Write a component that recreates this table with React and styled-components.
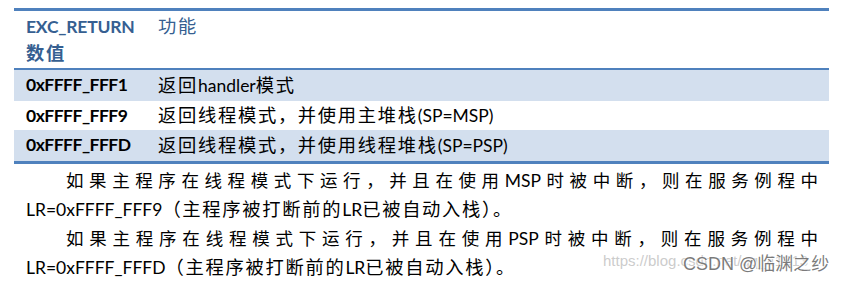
import React from "react";
import styled, { createGlobalStyle } from "styled-components";

const Global = createGlobalStyle`
  html, body { margin: 0; padding: 0; background: #ffffff; }
  body { font-family: Lato, "Noto Sans CJK SC", sans-serif; color: #000; }
`;

const Page = styled.div`
  position: relative;
  width: 845px;
  height: 281px;
  overflow: hidden;
  padding: 8px 0 0 14px;
  box-sizing: border-box;
`;

const Table = styled.table`
  width: 815px;
  border-collapse: collapse;
  font-size: 17.5px;
`;

const HeadRow = styled.tr`
  border-top: 3px solid #4f81bd;
  border-bottom: 2px solid #4f81bd;
`;

const HeadCell = styled.th`
  text-align: left;
  vertical-align: top;
  font-weight: ${(p) => (p.$bold ? 700 : 400)};
  color: #365f91;
  line-height: 27px;
  height: 59px;
  padding: 2px 0 0 12px;
  box-sizing: border-box;
  letter-spacing: ${(p) => (p.$bold ? "-0.2px" : "0")};
  width: ${(p) => p.$w || "auto"};
`;

const Row = styled.tr`
  background: ${(p) => (p.$shade ? "#d3dfee" : "#ffffff")};
  border-bottom: ${(p) => (p.$last ? "3px solid #4f81bd" : "none")};
`;

const CodeCell = styled.td`
  font-weight: 700;
  letter-spacing: -0.5px;
  padding: 0 0 0 12px;
  height: ${(p) => p.$h}px;
  line-height: ${(p) => p.$h}px;
  width: 120px;
`;

const TextCell = styled.td`
  padding: 0 0 0 12px;
  height: ${(p) => p.$h}px;
  line-height: ${(p) => p.$h}px;
`;

const Han = styled.span`
  font-size: 18.3px;
  letter-spacing: 1.7px;
`;

const Body = styled.div`
  width: 792px;
  padding: 2px 0 0 12px;
  font-size: 17.5px;
  line-height: 29px;
`;

const JustLine = styled.div`
  text-indent: 40px;
  text-align: justify;
  text-align-last: justify;
  text-justify: inter-character;
`;

const Line = styled.div``;

const Watermark = styled.div`
  position: absolute;
  left: 603px;
  top: 252px;
  white-space: nowrap;
  font-family: "Liberation Sans", sans-serif;
  font-size: 15px;
  color: rgba(190, 190, 190, 0.8);
`;

const Mark = styled.div`
  position: absolute;
  left: 683px;
  top: 249px;
  white-space: nowrap;
  font-family: "Liberation Sans", "Noto Sans CJK SC", sans-serif;
  font-size: 18px;
  color: rgba(80, 80, 80, 0.75);
  text-shadow: 0 0 2px #fff, 1px 1px 0 #fff;
`;

const HAN_RE = /([\u3000-\u303f\u3400-\u9fff\uff00-\uffef]+)/;

function Mixed({ text }) {
  return text
    .split(HAN_RE)
    .filter(Boolean)
    .map((part, i) =>
      HAN_RE.test(part) ? <Han key={i}>{part}</Han> : <React.Fragment key={i}>{part}</React.Fragment>
    );
}

const rows = [
  { code: "0xFFFF_FFF1", text: "返回handler模式", shade: true, h: 30 },
  { code: "0xFFFF_FFF9", text: "返回线程模式，并使用主堆栈(SP=MSP)", shade: false, h: 29 },
  { code: "0xFFFF_FFFD", text: "返回线程模式，并使用线程堆栈(SP=PSP)", shade: true, h: 30, last: true },
];

export default function App() {
  return (
    <>
      <Global />
      <Page>
        <Table>
          <thead>
            <HeadRow>
              <HeadCell $bold $w="132px">
                EXC_RETURN
                <br />
                <Han>数值</Han>
              </HeadCell>
              <HeadCell>
                <Han>功能</Han>
              </HeadCell>
            </HeadRow>
          </thead>
          <tbody>
            {rows.map((r) => (
              <Row key={r.code} $shade={r.shade} $last={r.last}>
                <CodeCell $h={r.h}>{r.code}</CodeCell>
                <TextCell $h={r.h}>
                  <Mixed text={r.text} />
                </TextCell>
              </Row>
            ))}
          </tbody>
        </Table>
        <Body>
          <JustLine>如果主程序在线程模式下运行，并且在使用MSP时被中断，则在服务例程中</JustLine>
          <Line>
            <Mixed text="LR=0xFFFF_FFF9（主程序被打断前的LR已被自动入栈）。" />
          </Line>
          <JustLine>如果主程序在线程模式下运行，并且在使用PSP时被中断，则在服务例程中</JustLine>
          <Line>
            <Mixed text="LR=0xFFFF_FFFD（主程序被打断前的LR已被自动入栈）。" />
          </Line>
        </Body>
        <Watermark>https://blog.csdn.net/qq_41313</Watermark>
        <Mark>CSDN @临渊之纱</Mark>
      </Page>
    </>
  );
}
